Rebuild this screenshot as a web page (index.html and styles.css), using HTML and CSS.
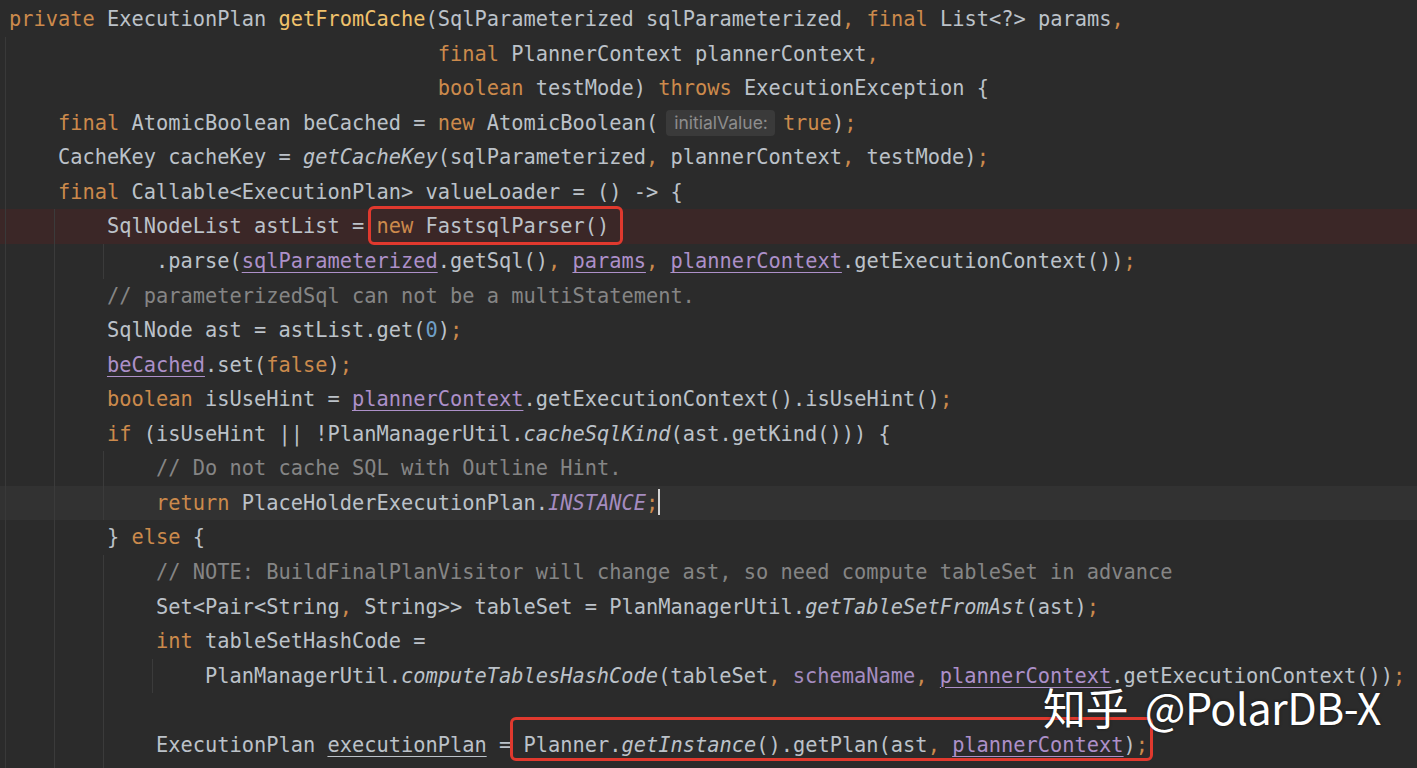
FILE: index.html
```html
<!DOCTYPE html>
<html lang="en">
<head>
    <meta charset="UTF-8">
    <meta name="viewport" content="width=device-width, initial-scale=1.0">
    <title>getFromCache</title>
    <link rel="stylesheet" href="styles.css">
</head>
<body>
    <div class="editor">
        <div class="ln"><span class="k">private</span> ExecutionPlan <span class="f">getFromCache</span>(SqlParameterized sqlParameterized<span class="k">,</span> <span class="k">final</span> List&lt;?&gt; params<span class="k">,</span></div>
        <div class="ln b">                                   <span class="k">final</span> PlannerContext plannerContext<span class="k">,</span></div>
        <div class="ln b">                                   <span class="k">boolean</span> testMode) <span class="k">throws</span> ExecutionException {</div>
        <div class="ln b">    <span class="k">final</span> AtomicBoolean beCached = <span class="k">new</span> AtomicBoolean(<span class="hint">initialValue:</span><span class="k">true</span>)<span class="k">;</span></div>
        <div class="ln b">    CacheKey cacheKey = <span class="i">getCacheKey</span>(sqlParameterized<span class="k">,</span> plannerContext<span class="k">,</span> testMode)<span class="k">;</span></div>
        <div class="ln b">    <span class="k">final</span> Callable&lt;ExecutionPlan&gt; valueLoader = () -&gt; {</div>
        <div class="ln b err"><span class="t"></span><span class="s"></span>SqlNodeList astList = <span class="mark mark-a"><span class="k">new</span> FastsqlParser()</span></div>
        <div class="ln b"><span class="t"></span><span class="t"></span><span class="s"></span>.parse(<span class="u">sqlParameterized</span>.getSql()<span class="k">,</span> <span class="u">params</span><span class="k">,</span> <span class="u">plannerContext</span>.getExecutionContext())<span class="k">;</span></div>
        <div class="ln b"><span class="t"></span><span class="s"></span><span class="c">// parameterizedSql can not be a multiStatement.</span></div>
        <div class="ln b"><span class="t"></span><span class="s"></span>SqlNode ast = astList.get(<span class="n">0</span>)<span class="k">;</span></div>
        <div class="ln b"><span class="t"></span><span class="s"></span><span class="u">beCached</span>.set(<span class="k">false</span>)<span class="k">;</span></div>
        <div class="ln b"><span class="t"></span><span class="s"></span><span class="k">boolean</span> isUseHint = <span class="u">plannerContext</span>.getExecutionContext().isUseHint()<span class="k">;</span></div>
        <div class="ln b"><span class="t"></span><span class="s"></span><span class="k">if</span> (isUseHint || !PlanManagerUtil.<span class="i">cacheSqlKind</span>(ast.getKind())) {</div>
        <div class="ln b"><span class="t"></span><span class="t"></span><span class="s"></span><span class="c">// Do not cache SQL with Outline Hint.</span></div>
        <div class="ln b caret-row"><span class="t"></span><span class="t"></span><span class="s"></span><span class="k">return</span> PlaceHolderExecutionPlan.<span class="p i">INSTANCE</span><span class="k">;</span><span class="caret"></span></div>
        <div class="ln b"><span class="t"></span><span class="s"></span>} <span class="k">else</span> {</div>
        <div class="ln b"><span class="t"></span><span class="t"></span><span class="s"></span><span class="c">// NOTE: BuildFinalPlanVisitor will change ast, so need compute tableSet in advance</span></div>
        <div class="ln b"><span class="t"></span><span class="t"></span><span class="s"></span>Set&lt;Pair&lt;String<span class="k">,</span> String&gt;&gt; tableSet = PlanManagerUtil.<span class="i">getTableSetFromAst</span>(ast)<span class="k">;</span></div>
        <div class="ln b"><span class="t"></span><span class="t"></span><span class="s"></span><span class="k">int</span> tableSetHashCode =</div>
        <div class="ln b"><span class="t"></span><span class="t"></span><span class="t"></span><span class="s"></span>PlanManagerUtil.<span class="i">computeTablesHashCode</span>(tableSet<span class="k">,</span> <span class="p">schemaName</span><span class="k">,</span> <span class="u">plannerContext</span>.getExecutionContext())<span class="k">;</span></div>
        <div class="ln b"><span class="t"></span><span class="t"></span></div>
        <div class="ln b"><span class="t"></span><span class="t"></span><span class="s"></span>ExecutionPlan <span class="r">executionPlan</span> = <span class="mark mark-b">Planner.<span class="i">getInstance</span>().getPlan(ast<span class="k">,</span> <span class="u">plannerContext</span>)<span class="k">;</span></span></div>
        <div class="ln b"><span class="t"></span><span class="t"></span></div>
    </div>

    <div class="watermark">知乎 @PolarDB-X</div>
</body>
</html>
```

FILE: styles.css
```css
body {
    margin: 0;
    height: 768px;
    overflow: hidden;
    background: #2b2b2b;
    position: relative;
}
.editor {
    padding-top: 2px;
    font-family: "DejaVu Sans Mono", "Liberation Mono", monospace;
    font-size: 20.35px;
    color: #bcc2c9;
}
.ln {
    height: 34.57px;
    line-height: 34.57px;
    padding-left: 9px;
    white-space: pre;
}
.ln.b {
    background: linear-gradient(#393939, #393939) 5px 0 / 1px 100% no-repeat;
}
.ln.err {
    background-color: #3b2727;
}
.ln.caret-row {
    background-color: #323232;
}
.t, .s {
    display: inline-block;
    width: 4ch;
    height: 34.57px;
    vertical-align: top;
}
.t {
    background: linear-gradient(#3b3b3b, #3b3b3b) 45px 0 / 1px 100% no-repeat;
}
.k { color: #cc8a4c; }
.f { color: #f0c26c; }
.c { color: #858585; }
.n { color: #6f9fc6; }
.p { color: #a58cc0; }
.i { font-style: italic; }
.u {
    color: #ad90c9;
    text-decoration: underline;
    text-underline-offset: 4px;
    text-decoration-thickness: 1px;
}
.r {
    text-decoration: underline;
    text-underline-offset: 4px;
    text-decoration-thickness: 1px;
}
.hint {
    display: inline-block;
    height: 26px;
    line-height: 26px;
    margin: 0 8px 0 8px;
    padding: 0 7px 0 8px;
    border-radius: 4px;
    background: #3a3a3a;
    color: #8d8d8d;
    font-family: Inter, "Noto Sans", sans-serif;
    font-size: 17.5px;
    vertical-align: 1px;
}
.caret {
    display: inline-block;
    width: 2px;
    height: 26px;
    background: #d4d4d4;
    vertical-align: middle;
    margin-top: -4px;
}
.mark {
    position: relative;
}
.mark::after {
    content: "";
    position: absolute;
    border: 3px solid #e0392e;
    border-radius: 6px;
}
.mark-a::after {
    left: -8px;
    right: -14px;
    top: -8px;
    bottom: -7px;
}
.mark-b::after {
    left: -13px;
    right: -5px;
    top: -16px;
    bottom: -4px;
}
.watermark {
    position: absolute;
    left: 1043px;
    top: 681px;
    font-family: "Noto Sans CJK SC", "Noto Sans", sans-serif;
    font-size: 43px;
    line-height: 50px;
    letter-spacing: -0.6px;
    word-spacing: 8px;
    color: #ffffff;
    text-shadow: 0 0 3px rgba(0,0,0,0.5);
    white-space: nowrap;
}
```
